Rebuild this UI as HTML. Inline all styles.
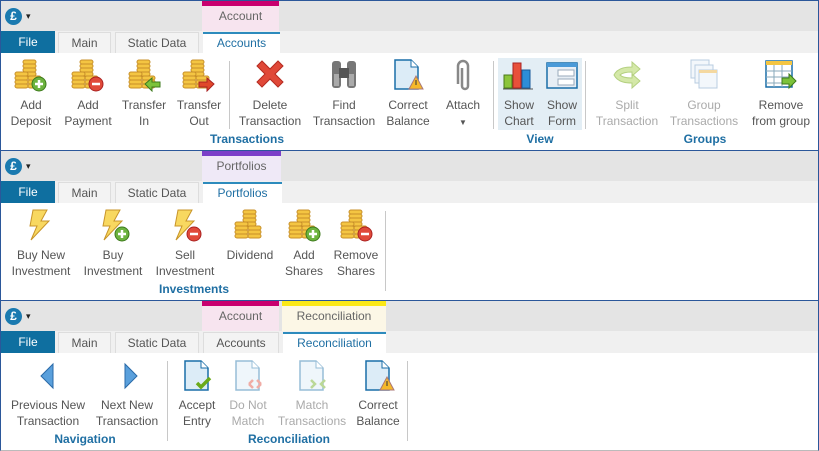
<!DOCTYPE html>
<html><head><meta charset="utf-8"><style>
*{margin:0;padding:0;box-sizing:border-box}
body{width:819px;height:451px;background:#fff;font-family:"Liberation Sans",sans-serif;font-size:12px;color:#555;position:relative;overflow:hidden}
.p{position:absolute;left:0;width:819px;border:1px solid #2b579a}
.tb{position:absolute;left:0;right:0;top:0;height:30px;background:#e4e4e4}
.tr{position:absolute;left:0;right:0;top:30px;height:22px;background:#f0f0f0}
.ct{position:absolute;left:0;right:0;top:52px;bottom:0;background:#fff}
.a{position:absolute}
.logo{position:absolute;left:4px;top:7px;width:17px;height:17px;border-radius:50%;background:#1a7ab0;color:#fff;font-weight:bold;font-size:12px;text-align:center;line-height:17px}
.dd{position:absolute;left:25px;top:10px;font-size:9px;color:#222}
.file{position:absolute;left:0;top:0;width:54px;height:22px;background:#0f6fa0;color:#fff;text-align:center;line-height:22px}
.tab{position:absolute;top:1px;height:21px;background:#f3f3f3;border:1px solid #ddd;border-bottom:none;text-align:center;line-height:20px;color:#555}
.tab.on{background:#fff;border:none;border-top:2px solid #2d8bbd;color:#1f6fa3;line-height:19px}
.ctx{position:absolute;top:0;height:30px;text-align:center;line-height:20px;color:#666}
.lb{position:absolute;width:120px;text-align:center;line-height:16px;color:#555}
.dis{color:#aaa}
.g{position:absolute;width:160px;text-align:center;font-weight:bold;color:#1f6fa3;line-height:16px}
.sep{position:absolute;width:1px;background:#c8c8c8}
svg.i{position:absolute;width:34px;height:34px}
</style></head><body>
<svg width="0" height="0" style="position:absolute">
<defs>
<symbol id="coin" viewBox="0 0 34 34">
<g fill="#f4c542" stroke="#c8902a" stroke-width="1">
<rect x="10" y="2" width="13" height="4" rx="2"/><rect x="10" y="6" width="13" height="4" rx="2"/><rect x="10" y="10" width="13" height="4" rx="2"/><rect x="10" y="14" width="13" height="4" rx="2"/>
<rect x="2" y="14" width="13" height="4" rx="2"/><rect x="2" y="18" width="13" height="4" rx="2"/><rect x="2" y="22" width="13" height="4" rx="2"/><rect x="2" y="26" width="13" height="4" rx="2"/>
<rect x="15" y="18" width="13" height="4" rx="2"/><rect x="15" y="22" width="13" height="4" rx="2"/><rect x="15" y="26" width="13" height="4" rx="2"/>
</g></symbol>
<symbol id="plus" viewBox="0 0 34 34"><circle cx="26" cy="26" r="7" fill="#6db33f" stroke="#3d7a1c"/><path d="M22 26h8M26 22v8" stroke="#fff" stroke-width="2.5"/></symbol>
<symbol id="minus" viewBox="0 0 34 34"><circle cx="26" cy="26" r="7" fill="#e04a3a" stroke="#a22"/><path d="M22 26h8" stroke="#fff" stroke-width="2.5"/></symbol>
<symbol id="bolt" viewBox="0 0 34 34"><path d="M10 2h14l-6 11h8L8 32l6-14H7z" fill="#f8d860" stroke="#c8952a"/></symbol>
<symbol id="doc" viewBox="0 0 34 34"><path d="M5 2h16l7 7v22H5z" fill="#dcecf7" stroke="#1a6ea8" stroke-width="1.5"/><path d="M21 2v7h7" fill="#fff" stroke="#1a6ea8"/></symbol>
</defs></svg>

<!-- PANEL 1 -->
<div class="p" style="top:0;height:151px">
<div class="tb"><div class="logo">£</div><div class="dd">▾</div>
<div class="ctx" style="left:201px;width:77px;background:#f7e4ef;border-top:5px solid #c8006f">Account</div></div>
<div class="tr"><div class="file">File</div>
<div class="tab" style="left:57px;width:53px">Main</div>
<div class="tab" style="left:114px;width:84px">Static Data</div>
<div class="tab on" style="left:202px;width:77px">Accounts</div></div>
<div class="ct">
<svg class="i" style="left:12px;top:5px"><use href="#coin"/><use href="#plus"/></svg>
<svg class="i" style="left:69px;top:5px"><use href="#coin"/><use href="#minus"/></svg>
<svg class="i" style="left:126px;top:5px"><use href="#coin"/><path d="M18 26l7-6v4h8v5h-8v4z" fill="#7cc23a" stroke="#3d7a1c"/></svg>
<svg class="i" style="left:180px;top:5px"><use href="#coin"/><path d="M33 26l-7-6v4h-8v5h8v4z" fill="#e0482a" stroke="#a22"/></svg>
<div class="sep" style="left:228px;top:8px;height:68px"></div>
<svg class="i" style="left:252px;top:5px"><path d="M4 8l5-5 8 8 8-8 5 5-8 8 8 8-5 5-8-8-8 8-5-5 8-8z" fill="#e04838" stroke="#b52a20"/></svg>
<svg class="i" style="left:326px;top:5px"><rect x="5" y="3" width="9" height="27" rx="3" fill="#777"/><rect x="20" y="3" width="9" height="27" rx="3" fill="#777"/><rect x="12" y="10" width="10" height="10" fill="#555"/><rect x="7" y="16" width="5" height="12" fill="#aaa"/><rect x="22" y="16" width="5" height="12" fill="#aaa"/></svg>
<svg class="i" style="left:389px;top:5px"><use href="#doc"/><path d="M26 18l7 13H19z" fill="#f5b82a" stroke="#a77"/><path d="M26 22v5" stroke="#333"/></svg>
<svg class="i" style="left:445px;top:5px"><path d="M12 26V8a5 5 0 0110 0v20a3 3 0 01-6 0V10" fill="none" stroke="#888" stroke-width="2.5"/></svg>
<div class="sep" style="left:492px;top:8px;height:68px"></div>
<div class="a" style="left:497px;top:5px;width:84px;height:72px;background:#e3eef5"></div>
<svg class="i" style="left:501px;top:5px"><rect x="2" y="17" width="8" height="13" fill="#8bc43a" stroke="#4a7a1a"/><rect x="11" y="5" width="8" height="25" fill="#e8503a" stroke="#a22"/><rect x="20" y="12" width="8" height="18" fill="#2d8dd8" stroke="#1a5a9a"/><path d="M1 31h30" stroke="#555"/></svg>
<svg class="i" style="left:544px;top:5px"><rect x="2" y="5" width="30" height="25" fill="#e7eef5" stroke="#1a6ea8" stroke-width="1.5"/><rect x="2" y="5" width="30" height="4" fill="#4a9ad8"/><rect x="13" y="12" width="16" height="6" fill="#fff" stroke="#9ab"/><rect x="13" y="21" width="16" height="6" fill="#fff" stroke="#9ab"/></svg>
<div class="sep" style="left:584px;top:8px;height:68px"></div>
<svg class="i" style="left:609px;top:5px"><path d="M4 17c4-8 14-8 18-8V4l8 7-8 7v-4c-6 0-10 1-12 3 2 2 6 3 12 3v-4l8 7-8 7v-5c-4 0-14 0-18-8z" fill="#d4e8a8" stroke="#b4d080"/></svg>
<svg class="i" style="left:686px;top:5px"><g fill="#f3f7fb" stroke="#b8cce0"><rect x="4" y="2" width="18" height="18"/><rect x="8" y="7" width="18" height="18"/><rect x="12" y="12" width="18" height="18"/></g><rect x="12" y="12" width="18" height="3" fill="#f4d8a0"/></svg>
<svg class="i" style="left:763px;top:5px"><rect x="2" y="3" width="26" height="26" fill="#fff" stroke="#1a6ea8" stroke-width="1.5"/><rect x="2" y="3" width="26" height="4" fill="#f4c542"/><path d="M2 13h26M2 19h26M2 25h26M10 7v22M18 7v22" stroke="#8ab"/><path d="M18 20h7v-4l7 7-7 7v-4h-7z" fill="#7cc23a" stroke="#3d7a1c"/></svg>
<div class="lb" style="left:-30px;top:44px">Add<br>Deposit</div>
<div class="lb" style="left:27px;top:44px">Add<br>Payment</div>
<div class="lb" style="left:83px;top:44px">Transfer<br>In</div>
<div class="lb" style="left:138px;top:44px">Transfer<br>Out</div>
<div class="lb" style="left:209px;top:44px">Delete<br>Transaction</div>
<div class="lb" style="left:283px;top:44px">Find<br>Transaction</div>
<div class="lb" style="left:347px;top:44px">Correct<br>Balance</div>
<div class="lb" style="left:402px;top:44px">Attach<br><span style="font-size:8px">▼</span></div>
<div class="lb" style="left:458px;top:44px">Show<br>Chart</div>
<div class="lb" style="left:501px;top:44px">Show<br>Form</div>
<div class="lb dis" style="left:566px;top:44px">Split<br>Transaction</div>
<div class="lb dis" style="left:643px;top:44px">Group<br>Transactions</div>
<div class="lb" style="left:720px;top:44px">Remove<br>from group</div>
<div class="g" style="left:166px;top:78px">Transactions</div>
<div class="g" style="left:459px;top:78px">View</div>
<div class="g" style="left:624px;top:78px">Groups</div>
</div></div>

<!-- PANEL 2 -->
<div class="p" style="top:150px;height:151px">
<div class="tb"><div class="logo">£</div><div class="dd">▾</div>
<div class="ctx" style="left:201px;width:79px;background:#efe9f7;border-top:5px solid #7b3fc8">Portfolios</div></div>
<div class="tr"><div class="file">File</div>
<div class="tab" style="left:57px;width:53px">Main</div>
<div class="tab" style="left:114px;width:84px">Static Data</div>
<div class="tab on" style="left:202px;width:79px">Portfolios</div></div>
<div class="ct">
<svg class="i" style="left:22px;top:5px"><use href="#bolt"/></svg>
<svg class="i" style="left:95px;top:5px"><use href="#bolt"/><use href="#plus"/></svg>
<svg class="i" style="left:167px;top:5px"><use href="#bolt"/><use href="#minus"/></svg>
<svg class="i" style="left:232px;top:5px"><use href="#coin"/></svg>
<svg class="i" style="left:286px;top:5px"><use href="#coin"/><use href="#plus"/></svg>
<svg class="i" style="left:338px;top:5px"><use href="#coin"/><use href="#minus"/></svg>
<div class="lb" style="left:-20px;top:44px">Buy New<br>Investment</div>
<div class="lb" style="left:52px;top:44px">Buy<br>Investment</div>
<div class="lb" style="left:124px;top:44px">Sell<br>Investment</div>
<div class="lb" style="left:189px;top:44px">Dividend</div>
<div class="lb" style="left:243px;top:44px">Add<br>Shares</div>
<div class="lb" style="left:295px;top:44px">Remove<br>Shares</div>
<div class="sep" style="left:384px;top:8px;height:80px"></div>
<div class="g" style="left:113px;top:78px">Investments</div>
</div></div>

<!-- PANEL 3 -->
<div class="p" style="top:300px;height:151px;border-bottom-color:#bbb">
<div class="tb"><div class="logo">£</div><div class="dd">▾</div>
<div class="ctx" style="left:201px;width:77px;background:#f7e4ef;border-top:5px solid #c8006f">Account</div>
<div class="ctx" style="left:281px;width:104px;background:#fcf7e6;border-top:5px solid #fbe817">Reconciliation</div></div>
<div class="tr"><div class="file">File</div>
<div class="tab" style="left:57px;width:53px">Main</div>
<div class="tab" style="left:114px;width:84px">Static Data</div>
<div class="tab" style="left:202px;width:76px">Accounts</div>
<div class="tab on" style="left:282px;width:103px">Reconciliation</div></div>
<div class="ct">
<svg class="i" style="left:32px;top:6px"><path d="M8 17L20 5v24z" fill="#5aa0dc" stroke="#2a6aa8"/></svg>
<svg class="i" style="left:110px;top:6px"><path d="M26 17L14 5v24z" fill="#5aa0dc" stroke="#2a6aa8"/></svg>
<div class="sep" style="left:166px;top:8px;height:80px"></div>
<svg class="i" style="left:179px;top:6px"><use href="#doc"/><path d="M17 24l4 4 9-9" fill="none" stroke="#6aaa1a" stroke-width="3.5"/></svg>
<svg class="i" style="left:230px;top:6px;opacity:.45"><use href="#doc"/><path d="M18 25l4-4M18 25l4 4M30 25l-4-4M30 25l-4 4" stroke="#e04a3a" stroke-width="2.5"/></svg>
<svg class="i" style="left:294px;top:6px;opacity:.45"><use href="#doc"/><path d="M16 21l4 4-4 4M30 21l-4 4 4 4" fill="none" stroke="#6aaa1a" stroke-width="2.5"/></svg>
<svg class="i" style="left:360px;top:6px"><use href="#doc"/><path d="M26 18l7 13H19z" fill="#f5b82a" stroke="#a77"/><path d="M26 22v5" stroke="#333"/></svg>
<div class="sep" style="left:406px;top:8px;height:80px"></div>
<div class="lb" style="left:-13px;top:44px">Previous New<br>Transaction</div>
<div class="lb" style="left:66px;top:44px">Next New<br>Transaction</div>
<div class="lb" style="left:136px;top:44px">Accept<br>Entry</div>
<div class="lb dis" style="left:187px;top:44px">Do Not<br>Match</div>
<div class="lb dis" style="left:251px;top:44px">Match<br>Transactions</div>
<div class="lb" style="left:317px;top:44px">Correct<br>Balance</div>
<div class="g" style="left:4px;top:78px">Navigation</div>
<div class="g" style="left:208px;top:78px">Reconciliation</div>
</div></div>
</body></html>
